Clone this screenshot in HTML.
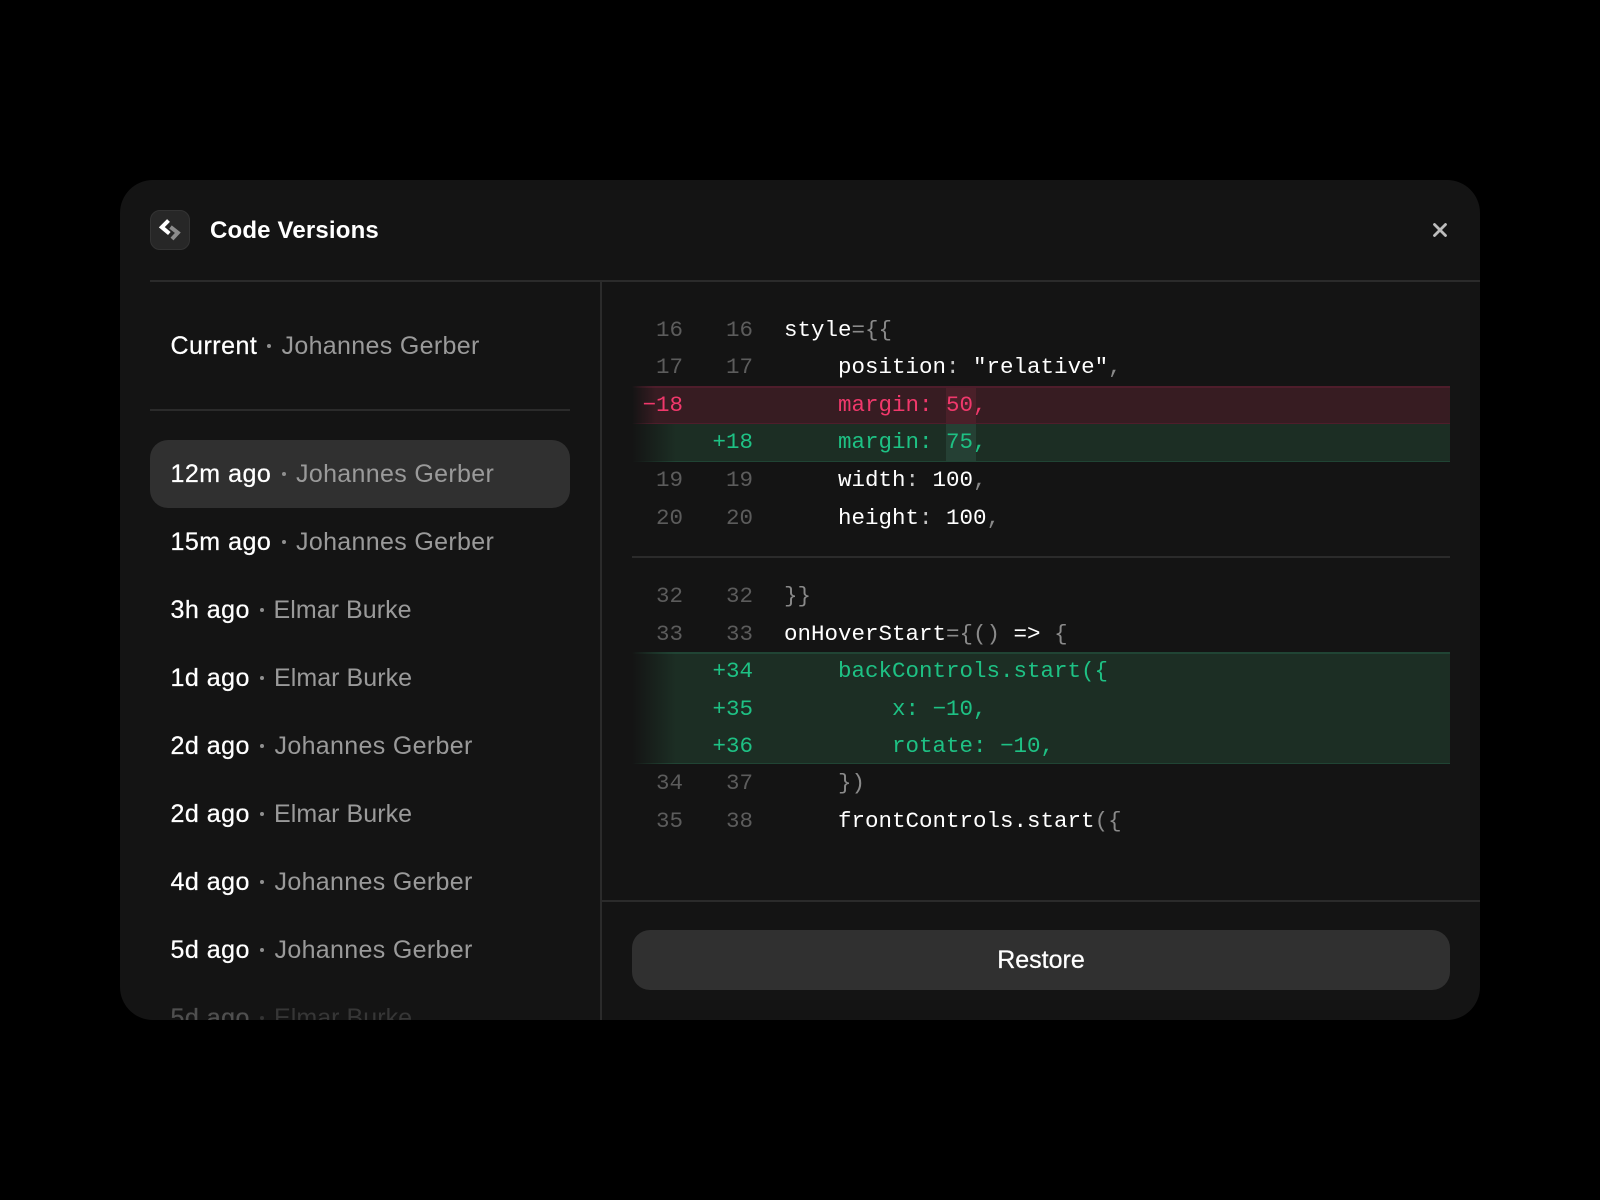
<!DOCTYPE html>
<html lang="en">
<head>
<meta charset="utf-8">
<title>Code Versions</title>
<style>
html,body{margin:0;padding:0;background:#000;width:1600px;height:1200px;overflow:hidden}
*{box-sizing:border-box}
#m{position:absolute;left:120px;top:180px;width:1360px;height:840px;background:#141414;border-radius:33px;overflow:hidden}
#p{position:absolute;left:0;top:0;width:1600px;height:1200px}
.a{position:absolute}
.ln{position:absolute;background:#2b2b2b;height:2px}
.s{position:absolute;font-family:"Liberation Sans",sans-serif;white-space:pre;font-size:25px;line-height:68px;height:68px}
.t{color:#fff;letter-spacing:.5px;-webkit-text-stroke:.25px #fff}
.n{color:#9a9a9a;letter-spacing:.33px}
.e{color:#9a9a9a;letter-spacing:.05px}
.d{position:absolute;width:4px;height:4px;border-radius:50%;background:#8f8f8f}
.row{position:absolute;left:632px;width:818px;height:37.5px}
.red{background:linear-gradient(90deg,rgba(55,28,34,0) 0,#371c22 24px)}
.grn{background:linear-gradient(90deg,rgba(28,46,36,0) 0,#1c2e24 44px)}
.b{position:absolute;left:632px;width:818px;height:1.5px}
.br{background:linear-gradient(90deg,rgba(78,29,43,0) 0,#4e1d2b 24px)}
.bg{background:linear-gradient(90deg,rgba(32,68,52,0) 0,#204434 44px)}
.c{position:absolute;font-family:"Liberation Mono",monospace;font-size:22.5px;line-height:37.5px;height:37.5px;white-space:pre;color:#fff;margin-top:1px}
.c i{font-style:normal;color:#8a8a8a}
.c u{text-decoration:none;color:#c4c4c4}
.num{color:#5c5c5c;text-align:right;width:60px}
.o{left:623px}
.w{left:693px}
.code{left:784px}
.rt{color:#f0386b}
.gt{color:#1ec184}
.rt i,.gt i{color:inherit}
</style>
</head>
<body>
<div id="m"></div>
<div id="p">
<div style="position:absolute;left:120px;top:180px;width:1360px;height:840px;border-radius:33px;overflow:hidden">
<div style="position:absolute;left:-120px;top:-180px;width:1600px;height:1200px">

<div class="a" style="left:150px;top:210px;width:40px;height:40px;border-radius:10px;background:#272727;border:1.5px solid #333"></div>
<svg class="a" style="left:0;top:0" width="1600" height="300" viewBox="0 0 1600 300">
<path d="M168.5 220.5L161.8 227.2L169.3 233.5" fill="none" stroke="#fff" stroke-width="4" stroke-linecap="butt" stroke-linejoin="miter"/>
<path d="M170.5 227L177.8 232.7L172 239" fill="none" stroke="#8c8c8c" stroke-width="4" stroke-linecap="butt" stroke-linejoin="miter"/>
<path d="M1434.5 224.5L1445.5 235.5M1445.5 224.5L1434.5 235.5" fill="none" stroke="#bdbdbd" stroke-width="2.8" stroke-linecap="round"/>
</svg>
<div class="s" style="left:210px;top:197px;font-size:24px;font-weight:700;color:#fff;letter-spacing:.17px">Code Versions</div>

<div class="ln" style="left:150px;top:280px;width:1330px"></div>
<div class="a" style="left:600px;top:281px;width:2px;height:740px;background:#2b2b2b"></div>
<div class="ln" style="left:150px;top:409px;width:420px"></div>
<div class="ln" style="left:632px;top:556px;width:818px"></div>
<div class="ln" style="left:602px;top:900px;width:878px"></div>

<div class="s t" style="left:170.5px;top:312px">Current</div><div class="d" style="left:267px;top:344px"></div><div class="s n" style="left:281.5px;top:312px">Johannes Gerber</div>

<div class="a" style="left:150px;top:440px;width:420px;height:68px;border-radius:18px;background:#303030"></div>

<div class="s t" style="left:170.5px;top:440px">12m ago</div><div class="d" style="left:282px;top:472px"></div><div class="s n" style="left:296px;top:440px">Johannes Gerber</div>
<div class="s t" style="left:170.5px;top:508px">15m ago</div><div class="d" style="left:282px;top:540px"></div><div class="s n" style="left:296px;top:508px">Johannes Gerber</div>
<div class="s t" style="left:170.5px;top:576px">3h ago</div><div class="d" style="left:259.5px;top:608px"></div><div class="s e" style="left:273.5px;top:576px">Elmar Burke</div>
<div class="s t" style="left:170.5px;top:644px">1d ago</div><div class="d" style="left:260px;top:676px"></div><div class="s e" style="left:274px;top:644px">Elmar Burke</div>
<div class="s t" style="left:170.5px;top:712px">2d ago</div><div class="d" style="left:260px;top:744px"></div><div class="s n" style="left:274.5px;top:712px">Johannes Gerber</div>
<div class="s t" style="left:170.5px;top:780px">2d ago</div><div class="d" style="left:260px;top:812px"></div><div class="s e" style="left:274px;top:780px">Elmar Burke</div>
<div class="s t" style="left:170.5px;top:848px">4d ago</div><div class="d" style="left:260px;top:880px"></div><div class="s n" style="left:274.5px;top:848px">Johannes Gerber</div>
<div class="s t" style="left:170.5px;top:916px">5d ago</div><div class="d" style="left:260px;top:948px"></div><div class="s n" style="left:274.5px;top:916px">Johannes Gerber</div>
<div class="s t" style="left:170.5px;top:984px;opacity:.25">5d ago</div><div class="d" style="left:260px;top:1016px;opacity:.25"></div><div class="s e" style="left:274px;top:984px;opacity:.25">Elmar Burke</div>

<div class="row red" style="top:386px"></div>
<div class="row grn" style="top:423.5px"></div>
<div class="a" style="left:946px;top:386px;width:30px;height:37px;background:#4a2029"></div>
<div class="a" style="left:946px;top:423.5px;width:30px;height:37px;background:#254034"></div>
<div class="b br" style="top:386px"></div>
<div class="b br" style="top:422.5px"></div>
<div class="b bg" style="top:460.5px"></div>

<div class="row grn" style="top:652px;height:111.5px"></div>
<div class="b bg" style="top:652px"></div>
<div class="b bg" style="top:762.5px"></div>

<div class="c num o" style="top:311px">16</div><div class="c num w" style="top:311px">16</div><div class="c code" style="top:311px">style<i>={{</i></div>
<div class="c num o" style="top:348px">17</div><div class="c num w" style="top:348px">17</div><div class="c code" style="top:348px">    position<u>:</u> "relative"<i>,</i></div>
<div class="c num o rt" style="top:386px">−18</div><div class="c code rt" style="top:386px">    margin: 50,</div>
<div class="c num w gt" style="top:423px">+18</div><div class="c code gt" style="top:423px">    margin: 75,</div>
<div class="c num o" style="top:461px">19</div><div class="c num w" style="top:461px">19</div><div class="c code" style="top:461px">    width<u>:</u> 100<i>,</i></div>
<div class="c num o" style="top:498.5px">20</div><div class="c num w" style="top:498.5px">20</div><div class="c code" style="top:498.5px">    height<u>:</u> 100<i>,</i></div>

<div class="c num o" style="top:577px">32</div><div class="c num w" style="top:577px">32</div><div class="c code" style="top:577px"><i>}}</i></div>
<div class="c num o" style="top:614.5px">33</div><div class="c num w" style="top:614.5px">33</div><div class="c code" style="top:614.5px">onHoverStart<i>={()</i> =&gt; <i>{</i></div>
<div class="c num w gt" style="top:652px">+34</div><div class="c code gt" style="top:652px">    backControls.start({</div>
<div class="c num w gt" style="top:689.5px">+35</div><div class="c code gt" style="top:689.5px">        x: −10,</div>
<div class="c num w gt" style="top:726.5px">+36</div><div class="c code gt" style="top:726.5px">        rotate: −10,</div>
<div class="c num o" style="top:764px">34</div><div class="c num w" style="top:764px">37</div><div class="c code" style="top:764px">    <i>})</i></div>
<div class="c num o" style="top:801.5px">35</div><div class="c num w" style="top:801.5px">38</div><div class="c code" style="top:801.5px">    frontControls.start<i>({</i></div>

<div class="a" style="left:632px;top:930px;width:818px;height:60px;border-radius:18px;background:#303030"></div>
<div class="s" style="left:632px;top:926px;width:818px;text-align:center;color:#fff;-webkit-text-stroke:.25px #fff">Restore</div>

</div>
</div>
</div>
</body>
</html>
